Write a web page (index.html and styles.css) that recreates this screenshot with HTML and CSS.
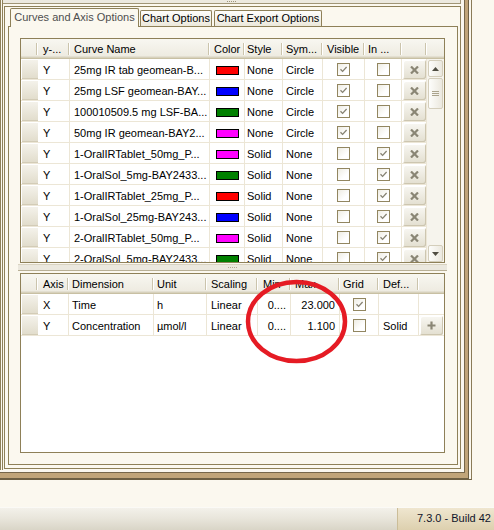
FILE: index.html
```html
<!DOCTYPE html>
<html>
<head>
<meta charset="utf-8">
<link rel="stylesheet" href="styles.css">
</head>
<body>
<div class="app">
  <div class="workspace">
    <div class="dock"><div class="dock-edge"><div class="dock-band"><div class="dock-shadow"><div class="dock-body">
      <div class="topstrip"><span class="grip"></span></div>
      <div class="groupbox">
        <div class="tabs">
          <div class="tab active">Curves and Axis Options</div>
          <div class="tab t2">Chart Options</div>
          <div class="tab t3">Chart Export Options</div>
        </div>
        <div class="tabpage">
          <div class="grid upper">
            <div class="ghead">
              <div class="hc w-rh"></div>
              <div class="hc w-y">y-...</div>
              <div class="hc w-name">Curve Name</div>
              <div class="hc w-color">Color</div>
              <div class="hc w-style">Style</div>
              <div class="hc w-sym">Sym...</div>
              <div class="hc w-vis">Visible</div>
              <div class="hc w-in">In ...</div>
              <div class="hc w-btn"></div>
              <div class="hc w-sb last"></div>
            </div>
            <div class="gbody">
              <div class="rows">
                <div class="row">
                  <div class="rh"></div>
                  <div class="c w-y">Y</div>
                  <div class="c w-name">25mg IR tab geomean-B...</div>
                  <div class="c w-color swc"><span class="sw red"></span></div>
                  <div class="c w-style">None</div>
                  <div class="c w-sym">Circle</div>
                  <div class="c w-vis cbc"><span class="cb"><svg viewBox="0 0 11 11"><path d="M2.5 5.2L4.6 7.4L8.6 3"/></svg></span></div>
                  <div class="c w-in cbc"><span class="cb"></span></div>
                  <div class="c w-btn bc"><span class="xbtn"><svg width="9" height="8" viewBox="0 0 9 8"><path d="M1 0.5L8 7.5M8 0.5L1 7.5"/></svg></span></div>
                </div>
                <div class="row">
                  <div class="rh"></div>
                  <div class="c w-y">Y</div>
                  <div class="c w-name">25mg LSF geomean-BAY...</div>
                  <div class="c w-color swc"><span class="sw blue"></span></div>
                  <div class="c w-style">None</div>
                  <div class="c w-sym">Circle</div>
                  <div class="c w-vis cbc"><span class="cb"><svg viewBox="0 0 11 11"><path d="M2.5 5.2L4.6 7.4L8.6 3"/></svg></span></div>
                  <div class="c w-in cbc"><span class="cb"></span></div>
                  <div class="c w-btn bc"><span class="xbtn"><svg width="9" height="8" viewBox="0 0 9 8"><path d="M1 0.5L8 7.5M8 0.5L1 7.5"/></svg></span></div>
                </div>
                <div class="row">
                  <div class="rh"></div>
                  <div class="c w-y">Y</div>
                  <div class="c w-name">100010509.5 mg LSF-BA...</div>
                  <div class="c w-color swc"><span class="sw green"></span></div>
                  <div class="c w-style">None</div>
                  <div class="c w-sym">Circle</div>
                  <div class="c w-vis cbc"><span class="cb"><svg viewBox="0 0 11 11"><path d="M2.5 5.2L4.6 7.4L8.6 3"/></svg></span></div>
                  <div class="c w-in cbc"><span class="cb"></span></div>
                  <div class="c w-btn bc"><span class="xbtn"><svg width="9" height="8" viewBox="0 0 9 8"><path d="M1 0.5L8 7.5M8 0.5L1 7.5"/></svg></span></div>
                </div>
                <div class="row">
                  <div class="rh"></div>
                  <div class="c w-y">Y</div>
                  <div class="c w-name">50mg IR geomean-BAY2...</div>
                  <div class="c w-color swc"><span class="sw magenta"></span></div>
                  <div class="c w-style">None</div>
                  <div class="c w-sym">Circle</div>
                  <div class="c w-vis cbc"><span class="cb"><svg viewBox="0 0 11 11"><path d="M2.5 5.2L4.6 7.4L8.6 3"/></svg></span></div>
                  <div class="c w-in cbc"><span class="cb"></span></div>
                  <div class="c w-btn bc"><span class="xbtn"><svg width="9" height="8" viewBox="0 0 9 8"><path d="M1 0.5L8 7.5M8 0.5L1 7.5"/></svg></span></div>
                </div>
                <div class="row">
                  <div class="rh"></div>
                  <div class="c w-y">Y</div>
                  <div class="c w-name">1-OralIRTablet_50mg_P...</div>
                  <div class="c w-color swc"><span class="sw magenta"></span></div>
                  <div class="c w-style">Solid</div>
                  <div class="c w-sym">None</div>
                  <div class="c w-vis cbc"><span class="cb"></span></div>
                  <div class="c w-in cbc"><span class="cb"><svg viewBox="0 0 11 11"><path d="M2.5 5.2L4.6 7.4L8.6 3"/></svg></span></div>
                  <div class="c w-btn bc"><span class="xbtn"><svg width="9" height="8" viewBox="0 0 9 8"><path d="M1 0.5L8 7.5M8 0.5L1 7.5"/></svg></span></div>
                </div>
                <div class="row">
                  <div class="rh"></div>
                  <div class="c w-y">Y</div>
                  <div class="c w-name">1-OralSol_5mg-BAY2433...</div>
                  <div class="c w-color swc"><span class="sw green"></span></div>
                  <div class="c w-style">Solid</div>
                  <div class="c w-sym">None</div>
                  <div class="c w-vis cbc"><span class="cb"></span></div>
                  <div class="c w-in cbc"><span class="cb"><svg viewBox="0 0 11 11"><path d="M2.5 5.2L4.6 7.4L8.6 3"/></svg></span></div>
                  <div class="c w-btn bc"><span class="xbtn"><svg width="9" height="8" viewBox="0 0 9 8"><path d="M1 0.5L8 7.5M8 0.5L1 7.5"/></svg></span></div>
                </div>
                <div class="row">
                  <div class="rh"></div>
                  <div class="c w-y">Y</div>
                  <div class="c w-name">1-OralIRTablet_25mg_P...</div>
                  <div class="c w-color swc"><span class="sw red"></span></div>
                  <div class="c w-style">Solid</div>
                  <div class="c w-sym">None</div>
                  <div class="c w-vis cbc"><span class="cb"></span></div>
                  <div class="c w-in cbc"><span class="cb"><svg viewBox="0 0 11 11"><path d="M2.5 5.2L4.6 7.4L8.6 3"/></svg></span></div>
                  <div class="c w-btn bc"><span class="xbtn"><svg width="9" height="8" viewBox="0 0 9 8"><path d="M1 0.5L8 7.5M8 0.5L1 7.5"/></svg></span></div>
                </div>
                <div class="row">
                  <div class="rh"></div>
                  <div class="c w-y">Y</div>
                  <div class="c w-name">1-OralSol_25mg-BAY243...</div>
                  <div class="c w-color swc"><span class="sw blue"></span></div>
                  <div class="c w-style">Solid</div>
                  <div class="c w-sym">None</div>
                  <div class="c w-vis cbc"><span class="cb"></span></div>
                  <div class="c w-in cbc"><span class="cb"><svg viewBox="0 0 11 11"><path d="M2.5 5.2L4.6 7.4L8.6 3"/></svg></span></div>
                  <div class="c w-btn bc"><span class="xbtn"><svg width="9" height="8" viewBox="0 0 9 8"><path d="M1 0.5L8 7.5M8 0.5L1 7.5"/></svg></span></div>
                </div>
                <div class="row">
                  <div class="rh"></div>
                  <div class="c w-y">Y</div>
                  <div class="c w-name">2-OralIRTablet_50mg_P...</div>
                  <div class="c w-color swc"><span class="sw magenta"></span></div>
                  <div class="c w-style">Solid</div>
                  <div class="c w-sym">None</div>
                  <div class="c w-vis cbc"><span class="cb"></span></div>
                  <div class="c w-in cbc"><span class="cb"><svg viewBox="0 0 11 11"><path d="M2.5 5.2L4.6 7.4L8.6 3"/></svg></span></div>
                  <div class="c w-btn bc"><span class="xbtn"><svg width="9" height="8" viewBox="0 0 9 8"><path d="M1 0.5L8 7.5M8 0.5L1 7.5"/></svg></span></div>
                </div>
                <div class="row">
                  <div class="rh"></div>
                  <div class="c w-y">Y</div>
                  <div class="c w-name">2-OralSol_5mg-BAY2433...</div>
                  <div class="c w-color swc"><span class="sw green"></span></div>
                  <div class="c w-style">Solid</div>
                  <div class="c w-sym">None</div>
                  <div class="c w-vis cbc"><span class="cb"></span></div>
                  <div class="c w-in cbc"><span class="cb"><svg viewBox="0 0 11 11"><path d="M2.5 5.2L4.6 7.4L8.6 3"/></svg></span></div>
                  <div class="c w-btn bc"><span class="xbtn"><svg width="9" height="8" viewBox="0 0 9 8"><path d="M1 0.5L8 7.5M8 0.5L1 7.5"/></svg></span></div>
                </div>
              </div>
              <div class="vscroll">
                <div class="sbtn"><svg width="7" height="4" viewBox="0 0 7 4"><path d="M0 4L3.5 0L7 4Z"/></svg></div>
                <div class="sbtn thumb"><svg width="7" height="7" viewBox="0 0 7 7"><path d="M0 1.5H7M0 3.5H7M0 5.5H7"/></svg></div>
                <div class="sbtn down"><svg width="7" height="4" viewBox="0 0 7 4"><path d="M0 0L3.5 4L7 0Z"/></svg></div>
              </div>
            </div>
          </div>
          <div class="hsplit"><span class="grip"></span></div>
          <div class="grid lower">
            <div class="ghead">
              <div class="hc w-rh"></div>
              <div class="hc w-axis">Axis</div>
              <div class="hc w-dim">Dimension</div>
              <div class="hc w-unit">Unit</div>
              <div class="hc w-scale">Scaling</div>
              <div class="hc w-min">Min</div>
              <div class="hc w-max">Max</div>
              <div class="hc w-grid">Grid</div>
              <div class="hc w-def">Def...</div>
              <div class="hc w-lbtn last"></div>
            </div>
            <div class="row">
              <div class="rh"></div>
              <div class="c w-axis">X</div>
              <div class="c w-dim">Time</div>
              <div class="c w-unit">h</div>
              <div class="c w-scale">Linear</div>
              <div class="c w-min num">0....</div>
              <div class="c w-max num">23.000</div>
              <div class="c w-grid cbc"><span class="cb"><svg viewBox="0 0 11 11"><path d="M2.5 5.2L4.6 7.4L8.6 3"/></svg></span></div>
              <div class="c w-def"></div>
              <div class="c w-lbtn"></div>
            </div>
            <div class="row">
              <div class="rh"></div>
              <div class="c w-axis">Y</div>
              <div class="c w-dim">Concentration</div>
              <div class="c w-unit">µmol/l</div>
              <div class="c w-scale">Linear</div>
              <div class="c w-min num">0....</div>
              <div class="c w-max num">1.100</div>
              <div class="c w-grid cbc"><span class="cb"></span></div>
              <div class="c w-def">Solid</div>
              <div class="c w-lbtn bc"><span class="xbtn"><svg width="9" height="9" viewBox="0 0 9 9"><path d="M4.5 0.5V8.5M0.5 4.5H8.5"/></svg></span></div>
            </div>
          </div>
        </div>
      </div>
    </div></div></div></div></div>
  </div>
  <div class="statusbar">
    <div class="status-main"></div>
    <div class="status-ver">7.3.0 - Build 42</div>
  </div>
  <svg class="annot" width="494" height="530" viewBox="0 0 494 530"><ellipse cx="296.5" cy="321.5" rx="48.5" ry="39.5"/></svg>
</div>
</body>
</html>
```
FILE: styles.css
```css
* { box-sizing: border-box; }
html, body { margin: 0; padding: 0; }
body {
  width: 494px; height: 530px; overflow: hidden;
  background: #fbf8ef;
  font-family: "Liberation Sans", Arial, sans-serif;
  font-size: 11px; color: #000;
}
.app { position: relative; width: 494px; height: 530px; display: flex; flex-direction: column; }
.workspace { height: 507px; flex: none; }

.dock { width: 472px; height: 480px; border-right: 1px solid #8a7b58; border-bottom: 1px solid #6e6043; }
.dock-edge { width: 469px; height: 479px; border-right: 1px solid #6e6043; border-bottom: 1px solid #6e6043; }
.dock-band { height: 100%; border-right: 3px solid #c1a579; border-bottom: 5px solid #c1a579; }
.dock-shadow { height: 100%; border-right: 1px solid #76674a; border-bottom: 1px solid #76674a; }
.dock-body { height: 470px; border-left: 3px double #8e8058; }

.topstrip {
  height: 4px; margin-right: 3px; padding-top: 1px;
  background: #ece9df; border-bottom: 1px solid #a09576; border-right: 1px solid #a09576;
  display: flex; justify-content: center; align-items: flex-start;
}
.grip { width: 9px; height: 1px; background: repeating-linear-gradient(to right, #9d947c 0 1px, transparent 1px 2px); }

.groupbox { height: 463px; margin: 2px 3px 0 1px; border: 1px solid #8e8058; }
.tabs { height: 19px; display: flex; align-items: flex-end; padding-left: 5px; }
.tab {
  height: 16px; border: 1px solid #8e8058; border-bottom: 0; border-radius: 2px 2px 0 0;
  background: linear-gradient(#fefefc, #ece8db);
  text-align: center; line-height: 15px; white-space: nowrap;
}
.tab.active {
  width: 129px; height: 19px; margin-bottom: -1px; position: relative; z-index: 1;
  background: #fbf8ef; color: #4e4e4e; line-height: 16px;
}
.t2 { width: 72px; margin-left: 1px; }
.t3 { width: 108px; margin-left: 2px; }
.tabpage {
  height: 439px; margin: 0 2px 0 3px; border: 1px solid #8e8058;
  padding: 11px 10px 11px 9px; display: flex; flex-direction: column;
}

.grid { margin: 0 2px; border: 1px solid #8e8058; background: #fff; overflow: hidden; flex: none; }
.upper { height: 225px; margin-bottom: 1px; }
.hsplit {
  height: 7px; margin-bottom: 2px; flex: none;
  border-top: 1px solid #d9d3c1; border-bottom: 1px solid #b9b096; background: #ebe8de;
  display: flex; justify-content: center; align-items: center;
}
.hsplit .grip { background: repeating-linear-gradient(to right, #b2aa92 0 1px, transparent 1px 2px); }
.lower { height: 180px; }

.ghead {
  display: flex; height: 20px;
  background: linear-gradient(#f8f7f1, #ece9de);
  box-shadow: inset 0 -1px #c8c0a3, inset 0 -2px #d7d1bc, inset 0 -3px #e3dfd1;
}
.hc {
  flex: none; height: 100%; padding: 1px 0 0 4px; line-height: 18px;
  white-space: nowrap; overflow: hidden;
  background:
    linear-gradient(#cbc4ac, #cbc4ac) no-repeat right 1px top 4px / 1px 12px,
    linear-gradient(#fff, #fff) no-repeat right 0 top 4px / 1px 12px;
}
.hc.last { background: none; }

.gbody { display: flex; height: 203px; }
.rows { width: 406px; flex: none; overflow: hidden; }
.row { display: flex; height: 21px; border-bottom: 1px solid #ece6d6; }
.c {
  flex: none; height: 100%; padding: 2px 0 0 4px; line-height: 18px;
  border-right: 1px solid #ece6d6; white-space: nowrap; overflow: hidden;
}
.rh {
  flex: none; width: 17px; height: 100%;
  background: linear-gradient(#f5f3ec, #e1dccb);
  box-shadow: inset 0 1px #fff, inset 1px 0 #fff, inset 0 -1px #d3ccb7;
}

.w-rh { width: 17px; padding: 0; }
.w-y { width: 32px; padding-left: 5px; }
.w-name { width: 140px; }
.w-color { width: 35px; }
.w-style { width: 38px; padding-left: 2px; }
.w-sym { width: 40px; padding-left: 3px; }
.w-vis { width: 42px; }
.w-in { width: 37px; padding-left: 3px; }
.w-btn { width: 25px; }
.w-sb { width: 17px; }

.w-axis { width: 31px; padding-left: 5px; }
.w-dim { width: 85px; padding-left: 3px; }
.w-unit { width: 53px; padding-left: 3px; }
.w-scale { width: 51px; padding-left: 4px; }
.w-min { width: 33px; padding-left: 5px; }
.w-max { width: 49px; padding-left: 4px; }
.w-grid { width: 39px; padding-left: 3px; }
.w-def { width: 40px; padding-left: 4px; }
.w-lbtn { width: 25px; }
.c.w-lbtn { border-right: 0; }

.num { text-align: right; padding-left: 0; padding-right: 4px; }
.swc { padding: 7px 0 0; display: flex; justify-content: center; align-items: flex-start; }
.cbc { padding: 4px 0 0; display: flex; justify-content: center; align-items: flex-start; }
.bc { padding: 1px 0 0 1px; }

.sw { display: block; width: 23px; height: 9px; border: 1px solid #000; }
.red { background: #ff0000; }
.blue { background: #0000ff; }
.green { background: #008000; }
.magenta { background: #ff00ff; }

.cb {
  display: block; width: 13px; height: 13px; border: 1px solid #928660;
  background: linear-gradient(135deg, #eeece3, #fff 65%);
}
.cb svg { display: block; width: 11px; height: 11px; }
.cb path { fill: none; stroke: #868272; stroke-width: 1.3; }

.xbtn {
  display: flex; align-items: center; justify-content: center;
  width: 23px; height: 19px; border-radius: 2px;
  background: linear-gradient(#f8f7f2, #e3dfd0);
  box-shadow: inset -1px -1px #cdc6b0, inset 1px 1px #fff;
}
.xbtn path { fill: none; stroke: #8a8675; stroke-width: 2.2; }

.vscroll {
  width: 17px; flex: none; display: flex; flex-direction: column;
  background: #f6f4ed; padding: 1px 1px 0;
}
.sbtn {
  flex: none; height: 17px; border: 1px solid #d4cebb; border-radius: 2px;
  background: linear-gradient(to right, #fdfdfb, #ebe8de);
  display: flex; align-items: center; justify-content: center;
}
.sbtn path { fill: #4f4d42; }
.thumb { height: 31px; margin-top: 1px; }
.thumb path { fill: none; stroke: #aaa38c; stroke-width: 1; }
.down { margin-top: auto; }

.statusbar {
  height: 23px; flex: none; display: flex;
  background: linear-gradient(#f3f1ea, #e9e6dc 45%, #d9d5c7);
  border-top: 1px solid #fbfaf6;
}
.status-main { flex: 1; }
.status-ver {
  width: 97px; border-left: 1px solid #cbbd98;
  background: linear-gradient(#efe6cf, #ddd0ae);
  padding-left: 19px; line-height: 20px; color: #10142a; white-space: nowrap;
}

.annot { position: absolute; left: 0; top: 0; pointer-events: none; }
.annot ellipse { fill: none; stroke: #e51b24; stroke-width: 4.5; }
```
